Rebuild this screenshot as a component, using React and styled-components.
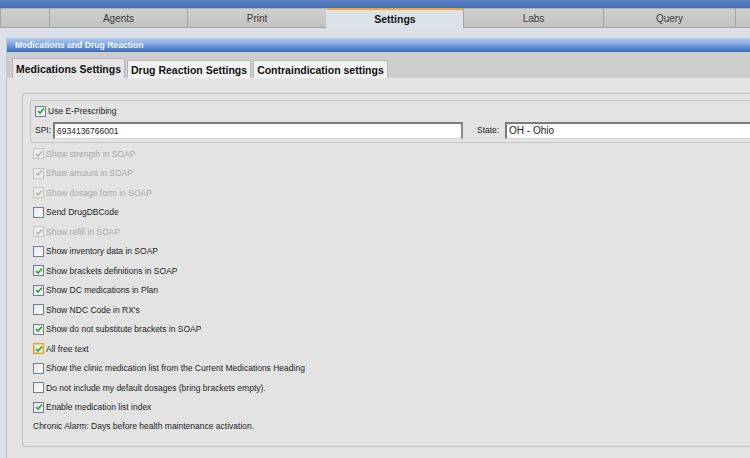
import React from 'react';
import styled, { createGlobalStyle } from 'styled-components';

const GlobalStyle = createGlobalStyle`
  html, body { margin: 0; padding: 0; }
  body {
    font-family: "Liberation Sans", Arial, sans-serif;
    background: #dfe3ea;
    overflow: hidden;
  }
`;

const Page = styled.div`
  width: 750px;
  height: 458px;
  overflow: hidden;
  display: flex;
  flex-direction: column;
  background: #dce1e9;
`;

const TopStrip = styled.div`
  height: 8px;
  background: linear-gradient(to bottom, #5a80c2, #466fb6);
  flex-shrink: 0;
`;

const TabBar = styled.div`
  display: flex;
  height: 20px;
  flex-shrink: 0;
  background: #c6c6c6;
`;

const Tab = styled.div`
  flex: 0 0 ${p => p.w}px;
  box-sizing: border-box;
  display: flex;
  align-items: center;
  justify-content: center;
  font-size: ${p => (p.active ? '10.5px' : '10px')};
  font-weight: ${p => (p.active ? 'bold' : 'normal')};
  color: ${p => (p.active ? '#111' : '#3a3a3a')};
  background: ${p => (p.active
    ? '#dde2ea'
    : 'linear-gradient(to bottom, #d0d0d0, #c2c2c2)')};
  border-left: 1px solid ${p => (p.active ? '#dde2ea' : '#a6a6a6')};
  border-top: ${p => (p.active ? '2px solid #f0a82a' : '1px solid #b0b0b0')};
  border-bottom: ${p => (p.active ? 'none' : '1px solid #a0a0a0')};
`;

const Body = styled.div`
  flex: 1;
  display: flex;
  flex-direction: column;
  padding: 10px 0 0 6px;
  min-height: 0;
`;

const Panel = styled.div`
  flex: 1;
  display: flex;
  flex-direction: column;
  border-left: 1px solid #b9c4d4;
  min-height: 0;
`;

const PanelHeader = styled.div`
  height: 14px;
  flex-shrink: 0;
  display: flex;
  align-items: center;
  padding-left: 8px;
  font-size: 8.6px;
  font-weight: bold;
  color: #f4f7fc;
  background: linear-gradient(to bottom, #b4ccf0 0%, #86abe4 40%, #5a88d0 70%, #3f6eb8 100%);
`;

const SubTabBar = styled.div`
  height: 26px;
  flex-shrink: 0;
  display: flex;
  align-items: flex-end;
  gap: 2px;
  padding-left: 5px;
  background: #cdcdcd;
  border-bottom: 1px solid #e8e8e8;
`;

const SubTab = styled.div`
  height: ${p => (p.active ? '20px' : '18px')};
  box-sizing: border-box;
  display: flex;
  align-items: center;
  padding: 0 3px;
  font-size: 10.5px;
  font-weight: bold;
  color: #101010;
  background: ${p => (p.active ? '#e6e6e6' : '#f3f3f3')};
  border: 1px solid #b8b8b8;
  border-bottom: none;
`;

const Content = styled.div`
  flex: 1;
  display: flex;
  flex-direction: column;
  padding: 14px 0 0 15px;
  background: #e3e3e3;
  min-height: 0;
`;

const GroupBox = styled.div`
  height: 354px;
  flex-shrink: 0;
  box-sizing: border-box;
  border: 1px solid #c2c2c2;
  border-right: none;
  border-radius: 3px 0 0 3px;
  padding: 6px 0 0 7px;
  display: flex;
  flex-direction: column;
`;

const PrescribeBox = styled.div`
  height: 43px;
  box-sizing: border-box;
  border: 1px solid #c6c6c6;
  border-right: none;
  border-radius: 3px 0 0 3px;
  padding: 3px 0 0 4px;
  display: flex;
  flex-direction: column;
  gap: 3px;
`;

const Row = styled.label`
  display: flex;
  align-items: center;
  height: ${p => p.h || 19.5}px;
  font-size: 8.5px;
  color: ${p => (p.disabled ? '#a9a9a9' : '#1c1c1c')};
  white-space: nowrap;
`;

const FieldRow = styled.div`
  display: flex;
  align-items: center;
  height: 18px;
  font-size: 8.5px;
  color: #1c1c1c;
`;

const FieldLabel = styled.span`
  width: ${p => p.w}px;
  flex-shrink: 0;
  margin-left: ${p => p.gap || 0}px;
`;

const TextBox = styled.div`
  box-sizing: border-box;
  height: 17px;
  width: ${p => (p.w ? `${p.w}px` : 'auto')};
  flex: ${p => (p.w ? '0 0 auto' : '1')};
  display: flex;
  align-items: center;
  padding-left: 2px;
  background: #fff;
  border-top: 2px solid #7c7c7c;
  border-left: 2px solid #7c7c7c;
  border-right: ${p => (p.w ? '2px solid #8a8a8a' : 'none')};
  border-bottom: 1px solid #d4d4d4;
  font-size: ${p => p.fs || 8.5}px;
  color: #222;
`;

const List = styled.div`
  display: flex;
  flex-direction: column;
  padding: 1px 0 0 3px;
`;

const Box = styled.span`
  width: 11px;
  height: 11px;
  box-sizing: border-box;
  flex-shrink: 0;
  margin-right: 2px;
  display: flex;
  align-items: center;
  justify-content: center;
  border: 1px solid ${p => (p.disabled ? '#c4c4c4' : p.hover ? '#e0a42c' : '#6f7f92')};
  background: ${p => (p.disabled ? '#ececec' : 'linear-gradient(135deg, #e6e6e6, #ffffff)')};
  box-shadow: ${p => (p.hover ? 'inset 0 0 0 1px #f4cd6a' : 'none')};
`;

const Check = ({ checked, disabled, hover }) => (
  <Box disabled={disabled} hover={hover}>
    {checked && (
      <svg width="8" height="8" viewBox="0 0 8 8">
        <path d="M1 4 L3 6 L7 1.5" fill="none"
          stroke={disabled ? '#b4b4b4' : '#21a32a'} strokeWidth="1.6" />
      </svg>
    )}
  </Box>
);

const options = [
  { text: 'Show strength in SOAP', checked: true, disabled: true },
  { text: 'Show amount in SOAP', checked: true, disabled: true },
  { text: 'Show dosage form in SOAP', checked: true, disabled: true },
  { text: 'Send DrugDBCode' },
  { text: 'Show refill in SOAP', checked: true, disabled: true },
  { text: 'Show inventory data in SOAP' },
  { text: 'Show brackets definitions in SOAP', checked: true },
  { text: 'Show DC medications in Plan', checked: true },
  { text: "Show NDC Code in RX's" },
  { text: 'Show do not substitute brackets in SOAP', checked: true },
  { text: 'All free text', checked: true, hover: true },
  { text: 'Show the clinic medication list from the Current Medications Heading' },
  { text: 'Do not include my default dosages (bring brackets empty).' },
  { text: 'Enable medication list index', checked: true },
];

const tabs = [
  { label: '', w: 49 },
  { label: 'Agents', w: 138 },
  { label: 'Print', w: 139 },
  { label: 'Settings', w: 137, active: true },
  { label: 'Labs', w: 140 },
  { label: 'Query', w: 132 },
  { label: '', w: 15 },
];

const App = () => (
  <Page>
    <GlobalStyle />
    <TopStrip />
    <TabBar>
      {tabs.map((t, i) => (
        <Tab key={i} w={t.w} active={t.active}>{t.label}</Tab>
      ))}
    </TabBar>
    <Body>
      <Panel>
        <PanelHeader>Medications and Drug Reaction</PanelHeader>
        <SubTabBar>
          <SubTab active>Medications Settings</SubTab>
          <SubTab>Drug Reaction Settings</SubTab>
          <SubTab>Contraindication settings</SubTab>
        </SubTabBar>
        <Content>
          <GroupBox>
            <PrescribeBox>
              <Row h={14}>
                <Check checked />
                Use E-Prescribing
              </Row>
              <FieldRow>
                <FieldLabel w={18}>SPI:</FieldLabel>
                <TextBox w={410}>6934136766001</TextBox>
                <FieldLabel w={28} gap={14}>State:</FieldLabel>
                <TextBox fs={10}>OH - Ohio</TextBox>
              </FieldRow>
            </PrescribeBox>
            <List>
              {options.map(o => (
                <Row key={o.text} disabled={o.disabled}>
                  <Check checked={o.checked} disabled={o.disabled} hover={o.hover} />
                  {o.text}
                </Row>
              ))}
              <Row h={18}>Chronic Alarm: Days before health maintenance activation.</Row>
            </List>
          </GroupBox>
        </Content>
      </Panel>
    </Body>
  </Page>
);

export default App;
